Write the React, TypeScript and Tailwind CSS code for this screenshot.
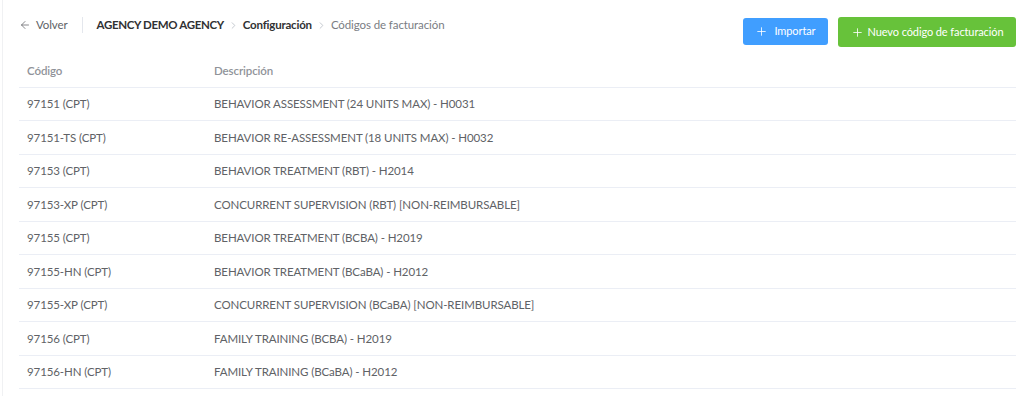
import { ArrowLeft, ChevronRight, Plus } from "lucide-react";

// BillingCode: one row of the billing codes table.
type BillingCode = {
  code: string;
  description: string;
};

const codes: BillingCode[] = [
  { code: "97151 (CPT)", description: "BEHAVIOR ASSESSMENT (24 UNITS MAX) - H0031" },
  { code: "97151-TS (CPT)", description: "BEHAVIOR RE-ASSESSMENT (18 UNITS MAX) - H0032" },
  { code: "97153 (CPT)", description: "BEHAVIOR TREATMENT (RBT) - H2014" },
  { code: "97153-XP (CPT)", description: "CONCURRENT SUPERVISION (RBT) [NON-REIMBURSABLE]" },
  { code: "97155 (CPT)", description: "BEHAVIOR TREATMENT (BCBA) - H2019" },
  { code: "97155-HN (CPT)", description: "BEHAVIOR TREATMENT (BCaBA) - H2012" },
  { code: "97155-XP (CPT)", description: "CONCURRENT SUPERVISION (BCaBA) [NON-REIMBURSABLE]" },
  { code: "97156 (CPT)", description: "FAMILY TRAINING (BCBA) - H2019" },
  { code: "97156-HN (CPT)", description: "FAMILY TRAINING (BCaBA) - H2012" },
];

function App() {
  return (
    <div className="w-[1024px] h-[396px] overflow-hidden bg-white font-['Lato',sans-serif] tracking-[-0.1px]">
      <div className="ml-[2px] h-full border-l border-[#f0f1f3] pl-[16px] pr-[8px] pt-[17px]">
        {/* Header */}
        <div className="flex items-start justify-between">
          <div className="flex items-center h-[16px] text-[11.5px]">
            <button className="flex items-center gap-[5px] text-[#606266]">
              <ArrowLeft size={12} strokeWidth={1.5} />
              <span>Volver</span>
            </button>
            <div className="mx-[14px] h-[16px] w-px bg-[#e4e7ed]" />
            <span className="font-bold tracking-[-0.35px] text-[#303133]">AGENCY DEMO AGENCY</span>
            <ChevronRight size={11} className="mx-[4px] text-[#c0c4cc]" />
            <span className="font-bold tracking-[-0.2px] text-[#303133]">Configuración</span>
            <ChevronRight size={11} className="mx-[4px] text-[#c0c4cc]" />
            <span className="text-[#7a7d83]">Códigos de facturación</span>
          </div>

          <div className="flex items-start gap-[10px]">
            <button className="mt-px flex items-center justify-center gap-[6px] w-[85px] h-[27px] rounded-[3px] bg-[#409eff] text-white text-[11px]">
              <Plus size={13} strokeWidth={1.5} />
              Importar
            </button>
            <button className="flex items-center justify-center gap-[4px] w-[178px] h-[30px] rounded-[3px] bg-[#67c23a] text-white text-[11px]">
              <Plus size={13} strokeWidth={1.5} />
              Nuevo código de facturación
            </button>
          </div>
        </div>

        {/* Table */}
        <div className="mt-[7px] text-[11.5px]">
          <div className="flex items-center h-[33.5px] border-b border-[#ebeef5] text-[#909399] font-semibold">
            <div className="w-[195px] pl-[8px]">Código</div>
            <div className="flex-1">Descripción</div>
          </div>
          {codes.map((item, index) => (
            <div
              key={index}
              className="flex items-center h-[33.5px] border-b border-[#ebeef5] text-[#606266]"
            >
              <div className="w-[195px] pl-[8px]">{item.code}</div>
              <div className="flex-1">{item.description}</div>
            </div>
          ))}
        </div>
      </div>
    </div>
  );
}

export default App;
